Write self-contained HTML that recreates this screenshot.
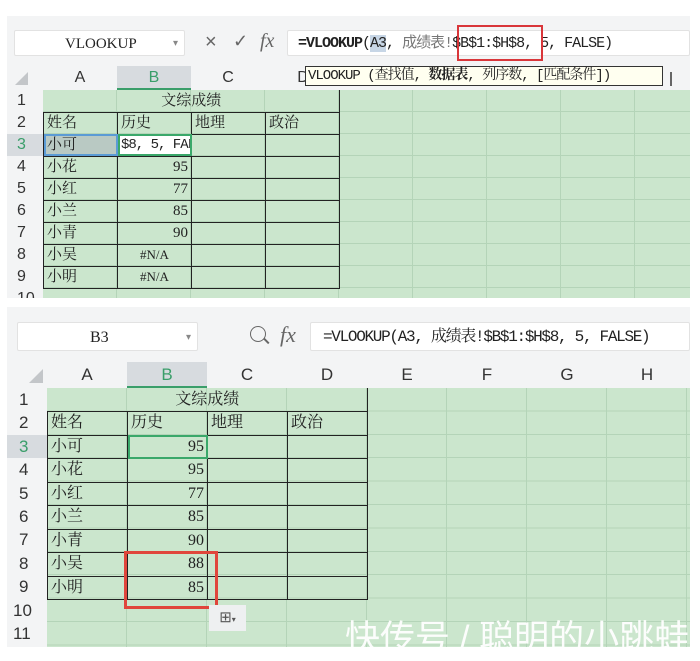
<!DOCTYPE html>
<html><head><meta charset="utf-8"><style>
*{margin:0;padding:0;box-sizing:border-box}
body{width:700px;height:656px;background:#fff;position:relative;overflow:hidden;font-family:"Liberation Serif","Noto Serif CJK SC",serif;color:#222}
.a{position:absolute}
.panel{background:#f3f4f5}
.box{background:#fff;border:1px solid #e2e2e2;border-radius:2px}
.green{background-color:#cbe6cd}
table{border-collapse:collapse;position:absolute;table-layout:fixed}
td{border:1.5px solid #222;padding:0 3px;white-space:nowrap;overflow:hidden;font-size:15px;line-height:16px}
.t1 td{height:22px}
.t2 td{height:23.5px;font-size:16px}
.r{text-align:right}
.hdr{font-family:"Liberation Sans",sans-serif;color:#333;text-align:center}
</style></head><body>

<!-- TOP PANEL -->
<div class="a panel" style="left:7px;top:16px;width:683px;height:282px"></div>
<div class="a box" style="left:14px;top:30px;width:171px;height:26px;font-size:15px;line-height:26px;padding-left:50px">VLOOKUP<span style="position:absolute;right:6px;font-size:10px;color:#888">▾</span></div>
<div class="a" style="left:205px;top:31px;font:20px 'Liberation Sans',sans-serif;color:#666">×</div>
<div class="a" style="left:233px;top:31px;font:18px 'Liberation Sans',sans-serif;color:#666">✓</div>
<div class="a" style="left:260px;top:30px;font:italic 20px 'Liberation Serif',serif;color:#666">fx</div>
<div class="a box" style="left:287px;top:30px;width:403px;height:26px;font-size:15px;line-height:26px;padding-left:10px;font-family:'Liberation Mono','Noto Sans CJK SC',monospace;letter-spacing:-1px"><b>=VLOOKUP</b>(<span style="background:#c7d6e6">A3</span>,<span style="color:#777"> 成绩表!</span>$B$1:$H$8, 5, FALSE)</div>
<div class="a" style="left:457px;top:25px;width:86px;height:36px;border:2px solid #d9363a"></div>
<div class="a hdr" style="left:7px;top:66px;width:683px;height:24px;font-size:16px;line-height:24px">
<span class="a" style="left:8px;top:6px;width:0;height:0;border-left:13px solid transparent;border-bottom:13px solid #c3c6c9"></span>
<span class="a" style="left:36px;width:74px">A</span>
<span class="a" style="left:110px;width:74px;background:#d7dbdf;color:#3a9e6a;border-bottom:2px solid #3a9e6a;height:24px">B</span>
<span class="a" style="left:184px;width:74px">C</span>
<span class="a" style="left:286px;width:20px">D</span>
</div>
<div class="a" style="left:305px;top:66px;width:358px;height:20px;background:#fffff0;border:1px solid #333;font-size:14px;line-height:18px;padding-left:2px;font-family:'Liberation Mono','Noto Serif CJK SC',monospace;white-space:nowrap;letter-spacing:-1px">VLOOKUP (查找值, <b>数据表</b>, 列序数, [匹配条件])</div>
<div class="a" style="left:670px;top:72px;width:2px;height:14px;background:#666"></div>
<div class="a hdr" style="left:7px;top:90px;width:36px;font-size:16px;line-height:22px;text-align:left;padding-left:10px">1<br>2<br><span style="background:#d7dbdf;color:#3a9e6a;display:block;margin-left:-10px;padding-left:10px">3</span>4<br>5<br>6<br>7<br>8<br>9<br>10</div>
<div class="a green" style="left:43px;top:90px;width:647px;height:208px;background-image:repeating-linear-gradient(90deg,transparent 0 73px,#b4d4b8 73px 74px),repeating-linear-gradient(180deg,transparent 0 21px,#b4d4b8 21px 22px)"></div>
<table class="t1" style="left:43px;top:90px;width:297px">
<colgroup><col style="width:74px"><col style="width:74px"><col style="width:74px"><col style="width:74px"></colgroup>
<tr><td colspan="4" style="text-align:center;border-top:none;border-left:none">文综成绩</td></tr>
<tr><td>姓名</td><td>历史</td><td>地理</td><td>政治</td></tr>
<tr><td style="background:#b9c9c3;outline:2px solid #5b9bd5;outline-offset:-2px">小可</td><td style="background:#fff;font-family:'Liberation Mono',monospace;font-size:14px;letter-spacing:-1px;outline:2px solid #3aa86a;outline-offset:-2px">$8, 5, FAL</td><td></td><td></td></tr>
<tr><td>小花</td><td class="r">95</td><td></td><td></td></tr>
<tr><td>小红</td><td class="r">77</td><td></td><td></td></tr>
<tr><td>小兰</td><td class="r">85</td><td></td><td></td></tr>
<tr><td>小青</td><td class="r">90</td><td></td><td></td></tr>
<tr><td>小吴</td><td style="text-align:center;font-size:13px">#N/A</td><td></td><td></td></tr>
<tr><td>小明</td><td style="text-align:center;font-size:13px">#N/A</td><td></td><td></td></tr>
</table>
<div class="a" style="left:0;top:298px;width:700px;height:9px;background:#fff"></div>

<!-- BOTTOM PANEL -->
<div class="a panel" style="left:7px;top:307px;width:683px;height:340px"></div>
<div class="a box" style="left:17px;top:322px;width:181px;height:29px;font-size:16px;line-height:29px;padding-left:72px">B3<span style="position:absolute;right:6px;font-size:10px;color:#888">▾</span></div>
<div class="a" style="left:250px;top:326px;width:16px;height:16px;border:1.5px solid #666;border-radius:50%"></div>
<div class="a" style="left:263px;top:340px;width:7px;height:1.5px;background:#666;transform:rotate(45deg)"></div>
<div class="a" style="left:280px;top:322px;font:italic 22px 'Liberation Serif',serif;color:#666">fx</div>
<div class="a box" style="left:310px;top:322px;width:380px;height:29px;font-size:16px;line-height:29px;padding-left:12px;font-family:'Liberation Mono','Noto Serif CJK SC',monospace;letter-spacing:-1.3px;white-space:nowrap">=VLOOKUP(A3, 成绩表!$B$1:$H$8, 5, FALSE)</div>
<div class="a hdr" style="left:7px;top:362px;width:683px;height:26px;font-size:17px;line-height:26px">
<span class="a" style="left:22px;top:7px;width:0;height:0;border-left:14px solid transparent;border-bottom:14px solid #c3c6c9"></span>
<span class="a" style="left:40px;width:80px">A</span>
<span class="a" style="left:120px;width:80px;background:#d7dbdf;color:#3a9e6a;border-bottom:2px solid #3a9e6a;height:26px">B</span>
<span class="a" style="left:200px;width:80px">C</span>
<span class="a" style="left:280px;width:80px">D</span>
<span class="a" style="left:360px;width:80px">E</span>
<span class="a" style="left:440px;width:80px">F</span>
<span class="a" style="left:520px;width:80px">G</span>
<span class="a" style="left:600px;width:80px">H</span>
</div>
<div class="a hdr" style="left:7px;top:388px;width:40px;font-size:17px;line-height:23.4px;text-align:left;padding-left:12px">1<br>2<br><span style="background:#d7dbdf;color:#3a9e6a;display:block;margin-left:-12px;padding-left:12px">3</span>4<br>5<br>6<br>7<br>8<br>9<br><span style="margin-left:-6px">10</span><br><span style="margin-left:-6px">11</span></div>
<div class="a green" style="left:47px;top:388px;width:643px;height:259px;background-image:repeating-linear-gradient(90deg,transparent 0 79px,#b4d4b8 79px 80px),repeating-linear-gradient(180deg,transparent 0 22.4px,#b4d4b8 22.4px 23.4px)"></div>
<table class="t2" style="left:47px;top:388px;width:321px">
<colgroup><col style="width:80px"><col style="width:80px"><col style="width:80px"><col style="width:80px"></colgroup>
<tr><td colspan="4" style="text-align:center;border-top:none;border-left:none">文综成绩</td></tr>
<tr><td>姓名</td><td>历史</td><td>地理</td><td>政治</td></tr>
<tr><td>小可</td><td class="r" style="outline:2.5px solid #3aa86a;outline-offset:-2px">95</td><td></td><td></td></tr>
<tr><td>小花</td><td class="r">95</td><td></td><td></td></tr>
<tr><td>小红</td><td class="r">77</td><td></td><td></td></tr>
<tr><td>小兰</td><td class="r">85</td><td></td><td></td></tr>
<tr><td>小青</td><td class="r">90</td><td></td><td></td></tr>
<tr><td>小吴</td><td class="r">88</td><td></td><td></td></tr>
<tr><td>小明</td><td class="r">85</td><td></td><td></td></tr>
</table>
<div class="a" style="left:124px;top:551px;width:94px;height:58px;border:3px solid #e0463c"></div>
<div class="a" style="left:209px;top:605px;width:37px;height:26px;background:#eef0f1;font:15px 'Liberation Sans','Noto Sans CJK SC',sans-serif;color:#555;text-align:center;line-height:26px">⊞<span style="font-size:8px">▾</span></div>
<div class="a" style="left:345px;top:610px;font:35px 'Liberation Sans','Noto Sans CJK SC',sans-serif;color:#fff;white-space:nowrap;opacity:.95">快传号 / 聪明的小跳蛙</div>
</body></html>
